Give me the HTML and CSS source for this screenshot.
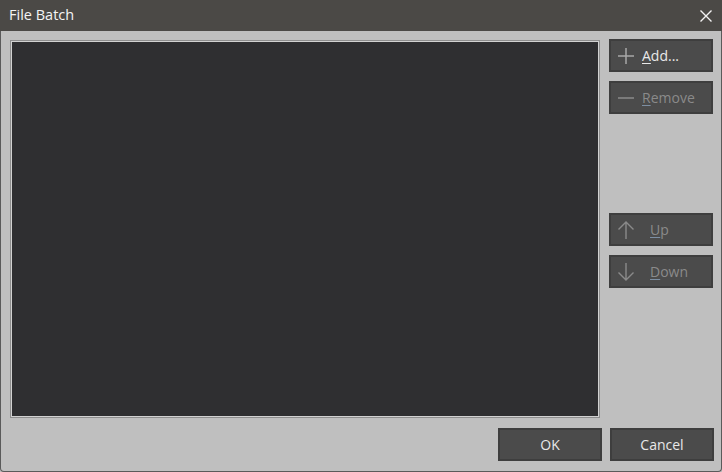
FILE: index.html
```html
<!DOCTYPE html>
<html>
<head>
<meta charset="utf-8">
<link rel="stylesheet" href="styles.css">
</head>
<body>
<div class="window">
  <div class="titlebar">
    <span class="title">File Batch</span>
    <svg class="close" width="12" height="12" viewBox="0 0 12 12"><path d="M0.5 0.5 L11.5 11.5 M11.5 0.5 L0.5 11.5" stroke="#f2f2f2" stroke-width="1.4" fill="none"/></svg>
  </div>
  <div class="content">
    <div class="main">
      <div class="listbox"></div>
      <div class="side">
        <button class="btn icon-btn">
          <svg class="ico" width="16" height="16" viewBox="0 0 16 16"><path d="M8 0 V16 M0 8 H16" stroke="#a8a8a8" stroke-width="1.5" fill="none"/></svg>
          <span class="label"><u>A</u>dd...</span>
        </button>
        <button class="btn icon-btn disabled">
          <svg class="ico" width="16" height="16" viewBox="0 0 16 16"><path d="M0 8 H16" stroke="#8a8a8a" stroke-width="1.5" fill="none"/></svg>
          <span class="label"><u>R</u>emove</span>
        </button>
        <div class="spacer"></div>
        <button class="btn icon-btn disabled">
          <svg class="ico" width="16" height="18" viewBox="0 0 16 18"><path d="M8 1 V18 M0.5 8.5 L8 1 L15.5 8.5" stroke="#8a8a8a" stroke-width="1.4" fill="none"/></svg>
          <span class="label wide"><u>U</u>p</span>
        </button>
        <button class="btn icon-btn disabled">
          <svg class="ico" width="16" height="18" viewBox="0 0 16 18"><path d="M8 0 V17 M0.5 9.5 L8 17 L15.5 9.5" stroke="#8a8a8a" stroke-width="1.4" fill="none"/></svg>
          <span class="label wide"><u>D</u>own</span>
        </button>
      </div>
    </div>
    <div class="footer">
      <button class="btn">OK</button>
      <button class="btn">Cancel</button>
    </div>
  </div>
</div>
</body>
</html>
```
FILE: styles.css
```css
html, body {
  margin: 0;
  padding: 0;
  background: #bfbfbf;
}
body {
  width: 722px;
  height: 472px;
  overflow: hidden;
  font-family: "Open Sans", "Noto Sans", sans-serif;
  font-size: 14px;
}
.window {
  width: 722px;
  height: 472px;
  box-sizing: border-box;
  border-left: 1px solid #5a5a5a;
  border-right: 1px solid #5a5a5a;
  border-bottom: 1px solid #5a5a5a;
  border-radius: 0 0 4px 4px;
  display: flex;
  flex-direction: column;
  background: #bfbfbf;
}
.titlebar {
  height: 31px;
  margin: 0 -1px;
  background: #4b4946;
  display: flex;
  align-items: center;
  justify-content: space-between;
  padding: 0 10px 0 9px;
  flex: none;
}
.title {
  color: #f4f4f4;
  font-size: 14.5px;
  position: relative;
  top: -1px;
}
.close {
  display: block;
}
.content {
  flex: 1;
  display: flex;
  flex-direction: column;
  padding: 8px 7px 10px 9px;
}
.main {
  display: flex;
  gap: 9px;
  height: 379px;
}
.listbox {
  width: 590px;
  height: 378px;
  margin-top: 1px;
  box-sizing: border-box;
  background: #2f2f31;
  border: 1px solid #8e8e8e;
  box-shadow: inset 0 0 0 1px #d2d2d2;
}
.side {
  width: 104px;
  display: flex;
  flex-direction: column;
  gap: 9px;
}
.spacer {
  height: 81px;
}
.btn {
  width: 104px;
  height: 33px;
  box-sizing: border-box;
  background: #4b4b4b;
  border: 2px solid #3e3e3e;
  color: #e8e8e8;
  font-family: inherit;
  font-size: 14px;
  padding: 0;
  margin: 0;
  display: flex;
  align-items: center;
  justify-content: center;
}
.icon-btn {
  justify-content: flex-start;
  padding-left: 7px;
}
.ico {
  display: block;
  flex: none;
}
.label {
  margin-left: 8px;
}
.label.wide {
  margin-left: 16px;
}
.label u {
  text-decoration-thickness: 1px;
  text-underline-offset: 2px;
}
.disabled {
  color: #8a8a8a;
}
.disabled .label u {
  text-decoration-color: #7d8fa3;
}
.footer {
  display: flex;
  justify-content: flex-end;
  gap: 8px;
  margin-top: 10px;
}
```
